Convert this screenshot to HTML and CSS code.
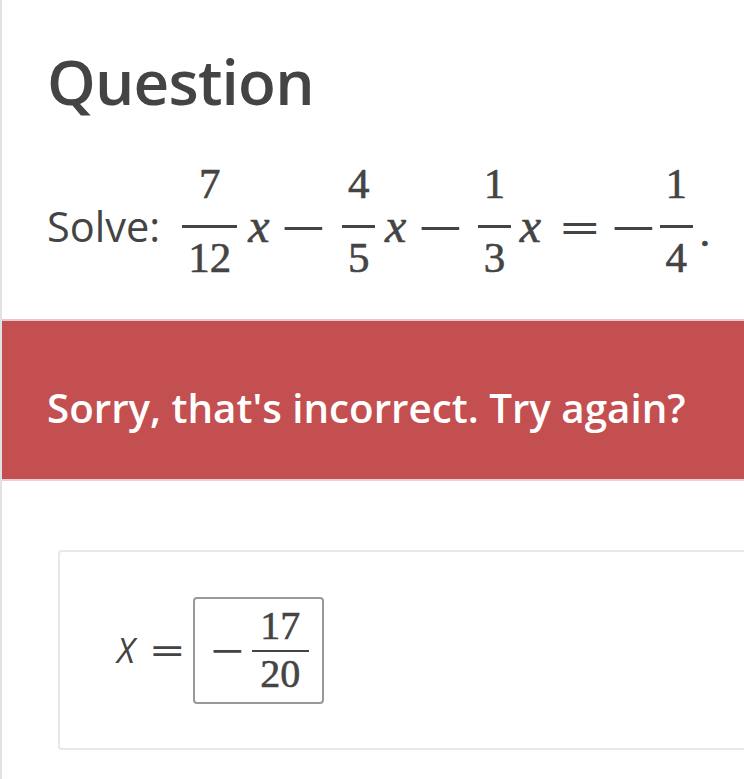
FILE: index.html
```html
<!DOCTYPE html>
<html lang="en">
<head>
<meta charset="utf-8">
<title>Question</title>
<link rel="stylesheet" href="styles.css">
</head>
<body>
<main class="card">
  <h1 class="title">Question</h1>
  <div class="prompt">
    <span class="label">Solve:</span>
    <span class="math">
      <span class="frac wide"><span class="num">7</span><span class="bar"></span><span class="den">12</span></span>
      <span class="var v1">x</span>
      <span class="op minus m1"><span class="glyph">−</span></span>
      <span class="frac f2"><span class="num">4</span><span class="bar"></span><span class="den">5</span></span>
      <span class="var v2">x</span>
      <span class="op minus m2"><span class="glyph">−</span></span>
      <span class="frac f3"><span class="num">1</span><span class="bar"></span><span class="den">3</span></span>
      <span class="var v3">x</span>
      <span class="op equals"><span class="glyph">=</span></span>
      <span class="op minus unary"><span class="glyph">−</span></span>
      <span class="frac f4"><span class="num">1</span><span class="bar"></span><span class="den">4</span></span>
      <span class="dot">.</span>
    </span>
  </div>
  <div class="banner">Sorry, that's incorrect. Try again?</div>
  <section class="answer">
    <div class="answer-row">
      <span class="ans-var">X</span>
      <span class="ans-eq"><span class="glyph">=</span></span>
      <div class="input">
        <span class="ans-minus"><span class="glyph">−</span></span>
        <span class="frac small"><span class="num">17</span><span class="bar"></span><span class="den">20</span></span>
      </div>
    </div>
  </section>
</main>
</body>
</html>
```
FILE: styles.css
```css
html, body {
  margin: 0;
  padding: 0;
  background: #fff;
  overflow: hidden;
}
body {
  font-family: "Open Sans", "Liberation Sans", sans-serif;
  color: #444;
}
.card {
  border-left: 2px solid #e2e2e2;
  min-height: 779px;
}
.title {
  margin: 0;
  padding: 44px 0 0 45px;
  font-size: 62px;
  font-weight: 600;
  line-height: 1.2;
  letter-spacing: -0.8px;
}

/* ---- prompt line ---- */
.prompt {
  display: flex;
  align-items: center;
  margin: 44px 0 0 45px;
}
.label {
  font-size: 41.5px;
  line-height: 1;
  margin-right: 22px;
}
.math {
  display: flex;
  align-items: center;
  font-family: "Liberation Serif", "DejaVu Serif", serif;
  font-size: 43px;
  color: #444;
}
.math .num,
.math .den,
.math .var,
.math .dot,
.input .num,
.input .den {
  -webkit-text-stroke: 0.6px #444;
}
.frac {
  display: inline-flex;
  flex-direction: column;
  align-items: center;
}
.frac .num {
  line-height: 1;
  padding: 0 5.5px 20px;
}
.frac .bar {
  align-self: stretch;
  height: 3px;
  background: #444;
}
.frac .den {
  line-height: 1;
  padding: 8px 5.5px 12px;
}
.frac.wide .num,
.frac.wide .den {
  padding-left: 6px;
  padding-right: 6px;
}
.var {
  font-style: italic;
  font-size: 48px;
  line-height: 1;
  margin-bottom: 2px;
}
.v1 { margin-left: 11px; }
.v2 { margin-left: 10px; }
.v3 { margin-left: 9px; }

.op {
  display: inline-flex;
  justify-content: center;
  font-family: "DejaVu Serif", serif;
  font-size: 40px;
  line-height: 1;
}
.op .glyph {
  display: inline-block;
}
.op.minus {
  width: 32px;
}
.op.minus .glyph {
  transform: scaleX(1.5);
}
.m1 { margin-left: 18px; }
.m2 { margin-left: 18px; }
.f2 { margin-left: 23px; }
.f3 { margin-left: 22px; }
.op.equals {
  width: 35px;
  margin-left: 21px;
}
.op.equals .glyph {
  transform: scaleX(1.3);
}
.op.unary {
  width: 31px;
  margin-left: 21px;
}
.f4 { margin-left: 11px; }
.dot {
  line-height: 1;
  margin: 0 0 -10px 7px;
}

/* ---- feedback banner ---- */
.banner {
  margin-top: 28px;
  background: #c44f50;
  border-top: 2px solid #e8c7c7;
  border-bottom: 2px solid #ecd0d0;
  color: #fff;
  font-size: 40.3px;
  font-weight: 600;
  line-height: 56px;
  padding: 59px 0 43px 45px;
}

/* ---- answer area ---- */
.answer {
  margin: 69px -30px 0 56px;
  height: 196px;
  border: 2px solid #e8e8e8;
  border-radius: 4px;
  display: flex;
  align-items: center;
  padding-left: 57px;
}
.answer-row {
  display: flex;
  align-items: center;
}
.ans-var {
  font-style: italic;
  font-size: 34px;
  line-height: 1;
}
.ans-eq {
  display: inline-flex;
  justify-content: center;
  width: 29px;
  font-family: "DejaVu Serif", serif;
  font-size: 34px;
  line-height: 1;
  margin: 0 11px 0 18px;
}
.ans-eq .glyph,
.ans-minus .glyph {
  display: inline-block;
  transform: scaleX(1.3);
}
.input {
  width: 131px;
  height: 107px;
  box-sizing: border-box;
  border: 2px solid #999;
  border-radius: 4px;
  display: flex;
  align-items: center;
  padding-left: 18px;
  font-family: "Liberation Serif", "DejaVu Serif", serif;
  font-size: 40px;
}
.ans-minus {
  display: inline-flex;
  justify-content: center;
  width: 28px;
  font-family: "DejaVu Serif", serif;
  font-size: 34px;
  line-height: 1;
  margin-right: 11px;
}
.frac.small .num {
  padding: 0 8.5px 3.5px;
}
.frac.small .bar {
  height: 2px;
}
.frac.small .den {
  padding: 2.5px 8.5px 0;
}
```
